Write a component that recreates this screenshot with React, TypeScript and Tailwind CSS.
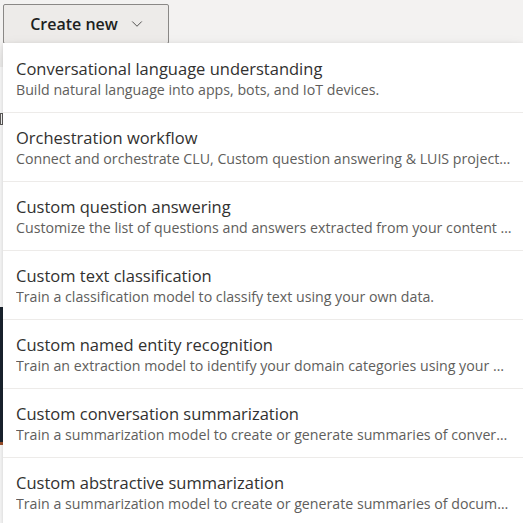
import { ChevronDown } from "lucide-react"

const items = [
  {
    title: "Conversational language understanding",
    desc: "Build natural language into apps, bots, and IoT devices.",
  },
  {
    title: "Orchestration workflow",
    desc: "Connect and orchestrate CLU, Custom question answering & LUIS projects together in one single project.",
  },
  {
    title: "Custom question answering",
    desc: "Customize the list of questions and answers extracted from your content to provide a conversational experience.",
  },
  {
    title: "Custom text classification",
    desc: "Train a classification model to classify text using your own data.",
  },
  {
    title: "Custom named entity recognition",
    desc: "Train an extraction model to identify your domain categories using your own data.",
  },
  {
    title: "Custom conversation summarization",
    desc: "Train a summarization model to create or generate summaries of conversations.",
  },
  {
    title: "Custom abstractive summarization",
    desc: "Train a summarization model to create or generate summaries of documents.",
  },
]

export default function App() {
  return (
    <div className="relative h-[523px] w-[523px] overflow-hidden bg-white font-['Segoe_UI','Open_Sans',sans-serif]">
      {/* Page behind the menu */}
      <div className="flex h-[43px] items-start bg-[#f3f2f1] pl-[3px] pt-[4px]">
        <button className="flex h-[40px] w-[166px] items-center justify-center gap-[10px] rounded-[2px] border border-[#8a8886] bg-[#edebe9] pl-[4px] text-[16px] font-semibold text-[#201f1e]">
          Create new
          <ChevronDown className="h-[18px] w-[18px] text-[#323130]" strokeWidth={1.1} />
        </button>
      </div>
      <div className="flex flex-col">
        <div className="h-[24px] w-[3px] bg-[#f3f2f1]" />
        <div className="mt-[46px] h-[12px] w-[3px] border border-[#605e5c]" />
        <div className="mt-[182px] h-[135px] w-[3px] bg-[#1b2430]" />
        <div className="h-[3px] w-[3px] bg-[#a0522d]" />
      </div>

      {/* Dropdown menu */}
      <div className="absolute left-[3px] right-0 top-[43px] bg-white shadow-[0_6px_14px_rgba(0,0,0,0.13),0_1px_4px_rgba(0,0,0,0.11)]">
        {items.map((item, i) => (
          <div
            key={item.title}
            className={`flex h-[69px] flex-col justify-center pl-[13px] pr-[11px] ${i > 0 ? "border-t border-[#edebe9]" : ""}`}
          >
            <div className="truncate text-[16.5px] leading-[23px] text-[#323130]">{item.title}</div>
            <div className="truncate text-[14.2px] leading-[19px] text-[#605e5c]">{item.desc}</div>
          </div>
        ))}
      </div>
    </div>
  )
}
